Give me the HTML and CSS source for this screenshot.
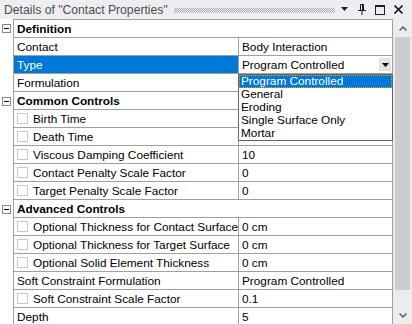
FILE: index.html
```html
<!DOCTYPE html>
<html lang="en">
<head>
    <meta charset="UTF-8" />
    <title>Details of "Contact Properties"</title>
    <link rel="stylesheet" href="styles.css">
</head>
<body>
    <div class="window">
        <div class="titlebar">
            <span class="title">Details of "Contact Properties"</span>
            <span class="grip"></span>
            <span class="tools">
                <svg class="tool" width="8" height="5" viewBox="0 0 8 5"><polygon points="0,0 7,0 3.5,4" fill="#1e1e1e"/></svg>
                <svg class="tool" width="8" height="11" viewBox="0 0 8 11">
                    <path d="M2.5 0.5 H5.5 V6.5 H2.5 Z" fill="none" stroke="#1e1e1e"/>
                    <path d="M5 0 V7" stroke="#1e1e1e" stroke-width="2"/>
                    <path d="M0 6.5 H8 M4 6.5 V11" stroke="#1e1e1e"/>
                </svg>
                <svg class="tool" width="10" height="10" viewBox="0 0 10 10">
                    <rect x="0.5" y="1" width="9" height="8.5" fill="none" stroke="#1e1e1e"/>
                    <path d="M0 1 H10" stroke="#1e1e1e" stroke-width="2"/>
                </svg>
                <svg class="tool" width="9" height="9" viewBox="0 0 9 9">
                    <path d="M0.5 0.5 L8.5 8.5 M8.5 0.5 L0.5 8.5" stroke="#1e1e1e" stroke-width="1.6"/>
                </svg>
            </span>
        </div>
        <div class="content">
            <div class="grid">
                <div class="row section first">
                    <span class="gutter"><span class="toggle"></span></span>
                    <span class="label">Definition</span>
                </div>
                <div class="row">
                    <span class="gutter"></span>
                    <span class="label">Contact</span>
                    <span class="value">Body Interaction</span>
                </div>
                <div class="row selected">
                    <span class="gutter"></span>
                    <span class="label">Type</span>
                    <span class="value combo">
                        Program Controlled
                        <span class="combo-btn">
                            <svg width="7" height="4" viewBox="0 0 7 4"><polygon points="0,0 7,0 3.5,4" fill="#000"/></svg>
                        </span>
                        <span class="dropdown">
                            <span class="option active">Program Controlled</span>
                            <span class="option">General</span>
                            <span class="option">Eroding</span>
                            <span class="option">Single Surface Only</span>
                            <span class="option">Mortar</span>
                        </span>
                    </span>
                </div>
                <div class="row">
                    <span class="gutter"></span>
                    <span class="label">Formulation</span>
                    <span class="value"></span>
                </div>
                <div class="row section">
                    <span class="gutter"><span class="toggle"></span></span>
                    <span class="label">Common Controls</span>
                </div>
                <div class="row">
                    <span class="gutter"></span>
                    <span class="label"><span class="check"></span>Birth Time</span>
                    <span class="value"></span>
                </div>
                <div class="row">
                    <span class="gutter"></span>
                    <span class="label"><span class="check"></span>Death Time</span>
                    <span class="value"></span>
                </div>
                <div class="row">
                    <span class="gutter"></span>
                    <span class="label"><span class="check"></span>Viscous Damping Coefficient</span>
                    <span class="value">10</span>
                </div>
                <div class="row">
                    <span class="gutter"></span>
                    <span class="label"><span class="check"></span>Contact Penalty Scale Factor</span>
                    <span class="value">0</span>
                </div>
                <div class="row">
                    <span class="gutter"></span>
                    <span class="label"><span class="check"></span>Target Penalty Scale Factor</span>
                    <span class="value">0</span>
                </div>
                <div class="row section">
                    <span class="gutter"><span class="toggle"></span></span>
                    <span class="label">Advanced Controls</span>
                </div>
                <div class="row">
                    <span class="gutter"></span>
                    <span class="label"><span class="check"></span>Optional Thickness for Contact Surface</span>
                    <span class="value">0 cm</span>
                </div>
                <div class="row">
                    <span class="gutter"></span>
                    <span class="label"><span class="check"></span>Optional Thickness for Target Surface</span>
                    <span class="value">0 cm</span>
                </div>
                <div class="row">
                    <span class="gutter"></span>
                    <span class="label"><span class="check"></span>Optional Solid Element Thickness</span>
                    <span class="value">0 cm</span>
                </div>
                <div class="row">
                    <span class="gutter"></span>
                    <span class="label">Soft Constraint Formulation</span>
                    <span class="value">Program Controlled</span>
                </div>
                <div class="row">
                    <span class="gutter"></span>
                    <span class="label"><span class="check"></span>Soft Constraint Scale Factor</span>
                    <span class="value">0.1</span>
                </div>
                <div class="row">
                    <span class="gutter"></span>
                    <span class="label">Depth</span>
                    <span class="value">5</span>
                </div>
            </div>
            <div class="scrollbar">
                <span class="arrow">
                    <svg width="8" height="5" viewBox="0 0 8 5"><path d="M0.5 4.5 L4 1 L7.5 4.5" fill="none" stroke="#606060" stroke-width="1.5"/></svg>
                </span>
                <span class="thumb"></span>
                <span class="arrow down">
                    <svg width="8" height="5" viewBox="0 0 8 5"><path d="M0.5 0.5 L4 4 L7.5 0.5" fill="none" stroke="#606060" stroke-width="1.5"/></svg>
                </span>
            </div>
        </div>
    </div>
</body>
</html>
```

FILE: styles.css
```css
body {
    margin: 0;
    font-family: "Segoe UI", "Liberation Sans", Arial, sans-serif;
    font-size: 11.8px;
    color: #000;
    background: #fff;
}
.window {
    width: 412px;
    height: 324px;
    overflow: hidden;
    display: flex;
    flex-direction: column;
}
.titlebar {
    height: 19px;
    flex: none;
    display: flex;
    align-items: center;
    background: #eeeef2;
    color: #4d4d4d;
    font-size: 12.2px;
}
.title {
    padding-left: 4px;
    white-space: nowrap;
}
.grip {
    flex: 1;
    height: 5px;
    margin: 1px 6px 0 6px;
    background: repeating-conic-gradient(#a9a9b3 0 25%, transparent 0 50%) 0 0 / 2px 2px;
}
.tools {
    display: flex;
    align-items: center;
    gap: 9px;
    padding-right: 9px;
}
.tool {
    display: block;
}
.content {
    flex: 1;
    display: flex;
    min-height: 0;
}
.grid {
    flex: 1;
    display: flex;
    flex-direction: column;
}
.row {
    display: flex;
    height: 18px;
    flex: none;
}
.row.first {
    height: 19px;
}
.row.first .label {
    border-top: 1px solid #a0a0a0;
}
.gutter {
    width: 13px;
    flex: none;
    display: flex;
    align-items: center;
    padding-left: 2px;
    box-sizing: border-box;
}
.toggle {
    width: 9px;
    height: 9px;
    box-sizing: border-box;
    border: 1px solid #8a8a8a;
    background: #fff;
    position: relative;
}
.toggle::after {
    content: "";
    position: absolute;
    left: 1px;
    top: 3px;
    width: 5px;
    height: 1px;
    background: #000;
}
.label {
    width: 226px;
    flex: none;
    box-sizing: border-box;
    border-left: 1px solid #a0a0a0;
    border-right: 1px solid #a0a0a0;
    border-bottom: 1px solid #a0a0a0;
    padding-left: 3px;
    display: flex;
    align-items: center;
    white-space: nowrap;
    overflow: hidden;
}
.value {
    flex: 1;
    box-sizing: border-box;
    border-right: 1px solid #a0a0a0;
    border-bottom: 1px solid #a0a0a0;
    padding-left: 3px;
    display: flex;
    align-items: center;
    white-space: nowrap;
}
.section .label {
    flex: 1;
    width: auto;
    font-weight: bold;
}
.selected .label {
    background: #0078d7;
    color: #fff;
}
.check {
    width: 11px;
    height: 11px;
    box-sizing: border-box;
    border: 1px solid #c8c8c8;
    background: #fff;
    margin-right: 5px;
    flex: none;
}
.combo {
    position: relative;
}
.combo-btn {
    position: absolute;
    right: 1px;
    top: 2px;
    width: 12px;
    height: 13px;
    background: #e3e3e3;
    display: flex;
    align-items: center;
    justify-content: center;
}
.dropdown {
    position: absolute;
    left: -1px;
    top: 18px;
    width: 155px;
    box-sizing: border-box;
    border: 1px solid #646464;
    background: #fff;
    display: flex;
    flex-direction: column;
    z-index: 2;
}
.option {
    height: 13px;
    line-height: 13px;
    padding-left: 2px;
}
.option.active {
    background: #0078d7;
    color: #fff;
    outline: 1px dotted #f0a020;
    outline-offset: -1px;
}
.scrollbar {
    width: 19px;
    flex: none;
    background: #ececec;
    display: flex;
    flex-direction: column;
    align-items: center;
}
.arrow {
    height: 18px;
    display: flex;
    align-items: center;
    justify-content: center;
}
.thumb {
    width: 15px;
    height: 253px;
    background: #cdcdcd;
}
.arrow.down {
    margin-top: 16px;
}
```
